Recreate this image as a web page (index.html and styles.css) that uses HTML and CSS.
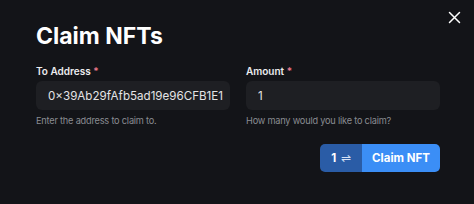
FILE: index.html
```html
<!DOCTYPE html>
<html lang="en">
<head>
    <meta charset="UTF-8">
    <meta name="viewport" content="width=device-width, initial-scale=1.0">
    <title>Claim NFTs</title>
    <link rel="stylesheet" href="styles.css">
</head>
<body>

    <div class="modal">
        <button class="close-button" aria-label="Close">
            <svg width="13" height="13" viewBox="0 0 13 13">
                <path d="M1.5 1.5 L11.5 11.5 M11.5 1.5 L1.5 11.5" stroke="#ffffff" stroke-width="1.5" stroke-linecap="round" />
            </svg>
        </button>

        <h1>Claim NFTs</h1>

        <div class="fields">
            <div class="field">
                <label for="to-address">To Address <span class="required">*</span></label>
                <input type="text" id="to-address" value="0×39Ab29fAfb5ad19e96CFB1E1" />
                <p class="helper">Enter the address to claim to.</p>
            </div>
            <div class="field">
                <label for="amount">Amount <span class="required">*</span></label>
                <input type="text" id="amount" value="1" />
                <p class="helper">How many would you like to claim?</p>
            </div>
        </div>

        <div class="actions">
            <div class="button-group">
                <button class="chain-button">1 <span class="swap">&#8652;</span></button>
                <button class="claim-button">Claim NFT</button>
            </div>
        </div>
    </div>

</body>
</html>
```

FILE: styles.css
```css
body {
    font-family: Inter, "Noto Sans", sans-serif;
    margin: 0;
    background-color: #131418;
    color: #ffffff;
}

.modal {
    position: relative;
    height: 204px;
    padding: 0 34px 0 36px;
    box-sizing: border-box;
}

.close-button {
    position: absolute;
    top: 11px;
    right: 13px;
    padding: 0;
    background: none;
    border: none;
    cursor: pointer;
    line-height: 0;
}

h1 {
    font-size: 23px;
    font-weight: 700;
    line-height: 28px;
    margin: 0;
    padding-top: 22px;
}

.fields {
    display: grid;
    grid-template-columns: 1fr 1fr;
    column-gap: 16px;
    margin-top: 15px;
}

.field label {
    display: block;
    font-size: 10px;
    font-weight: 600;
    line-height: 12px;
    color: #ececee;
}

.required {
    color: #e8778b;
}

.field input {
    display: block;
    width: 100%;
    box-sizing: border-box;
    height: 29px;
    margin-top: 4px;
    padding: 0 4px 0 12px;
    border: none;
    border-radius: 6px;
    background-color: #1e1f23;
    color: #e4e4e6;
    font-family: inherit;
    font-size: 11.6px;
    outline: none;
}

.helper {
    margin: 5px 0 0;
    font-size: 9.2px;
    line-height: 11px;
    letter-spacing: -0.2px;
    color: #8a8c92;
}

.actions {
    display: flex;
    justify-content: flex-end;
    margin-top: 18px;
}

.button-group {
    display: flex;
    border-radius: 5px;
    overflow: hidden;
}

.button-group button {
    height: 28px;
    padding: 0;
    border: none;
    color: #ffffff;
    font-family: inherit;
    font-size: 11.5px;
    font-weight: 700;
    cursor: pointer;
}

.chain-button {
    width: 42px;
    background-color: #2a5ca6;
}

.swap {
    margin-left: 2px;
    font-weight: 400;
    color: #d6e2f5;
}

.claim-button {
    width: 78px;
    background-color: #3b8ef6;
}
```
